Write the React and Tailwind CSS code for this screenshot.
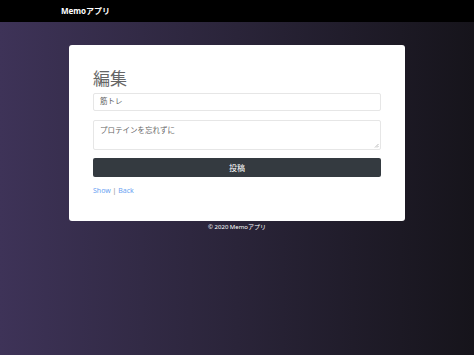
export default function App() {
  return (
    <div className="w-[474px] h-[355px] overflow-hidden bg-gradient-to-r from-[#3e3358] via-[#2a2439] to-[#16141b]" style={{ fontFamily: '"Noto Sans", "Noto Sans CJK JP", sans-serif' }}>
      <div className="h-[22px] bg-black flex items-center pl-[61px]">
        <span className="text-white font-bold text-[8px] leading-none">Memoアプリ</span>
      </div>
      <div className="flex justify-center pt-[23px]">
        <div className="w-[336px] bg-white rounded-[3px] px-[24px] pt-[22px] pb-[24px] flex flex-col">
          <h1 className="text-[17px] leading-[24px] text-[#666] mb-[2px]">編集</h1>
          <div className="h-[18px] border border-[#e6e6e6] rounded-[2px] flex items-center px-[6px] text-[7.5px] text-[#666]">筋トレ</div>
          <div className="h-[30px] mt-[9px] border border-[#e6e6e6] rounded-[2px] px-[6px] pt-[3px] text-[7.5px] leading-[12px] text-[#666] relative">
            プロテインを忘れずに
            <svg className="absolute right-[1px] bottom-[1px]" width="5" height="5" viewBox="0 0 5 5"><path d="M4.5 1 L1 4.5 M4.5 3 L3 4.5" stroke="#aaa" strokeWidth="0.8" /></svg>
          </div>
          <div className="h-[19px] mt-[8px] bg-[#343a40] rounded-[2px] flex items-center justify-center text-white text-[8px]">投稿</div>
          <div className="mt-[8px] text-[7px] leading-[12px] text-[#6aa3f2]">
            <span>Show</span><span className="text-[#888]"> | </span><span>Back</span>
          </div>
        </div>
      </div>
      <div className="text-center text-white text-[6px] leading-[10px] mt-[1px]">© 2020 Memoアプリ</div>
    </div>
  );
}
